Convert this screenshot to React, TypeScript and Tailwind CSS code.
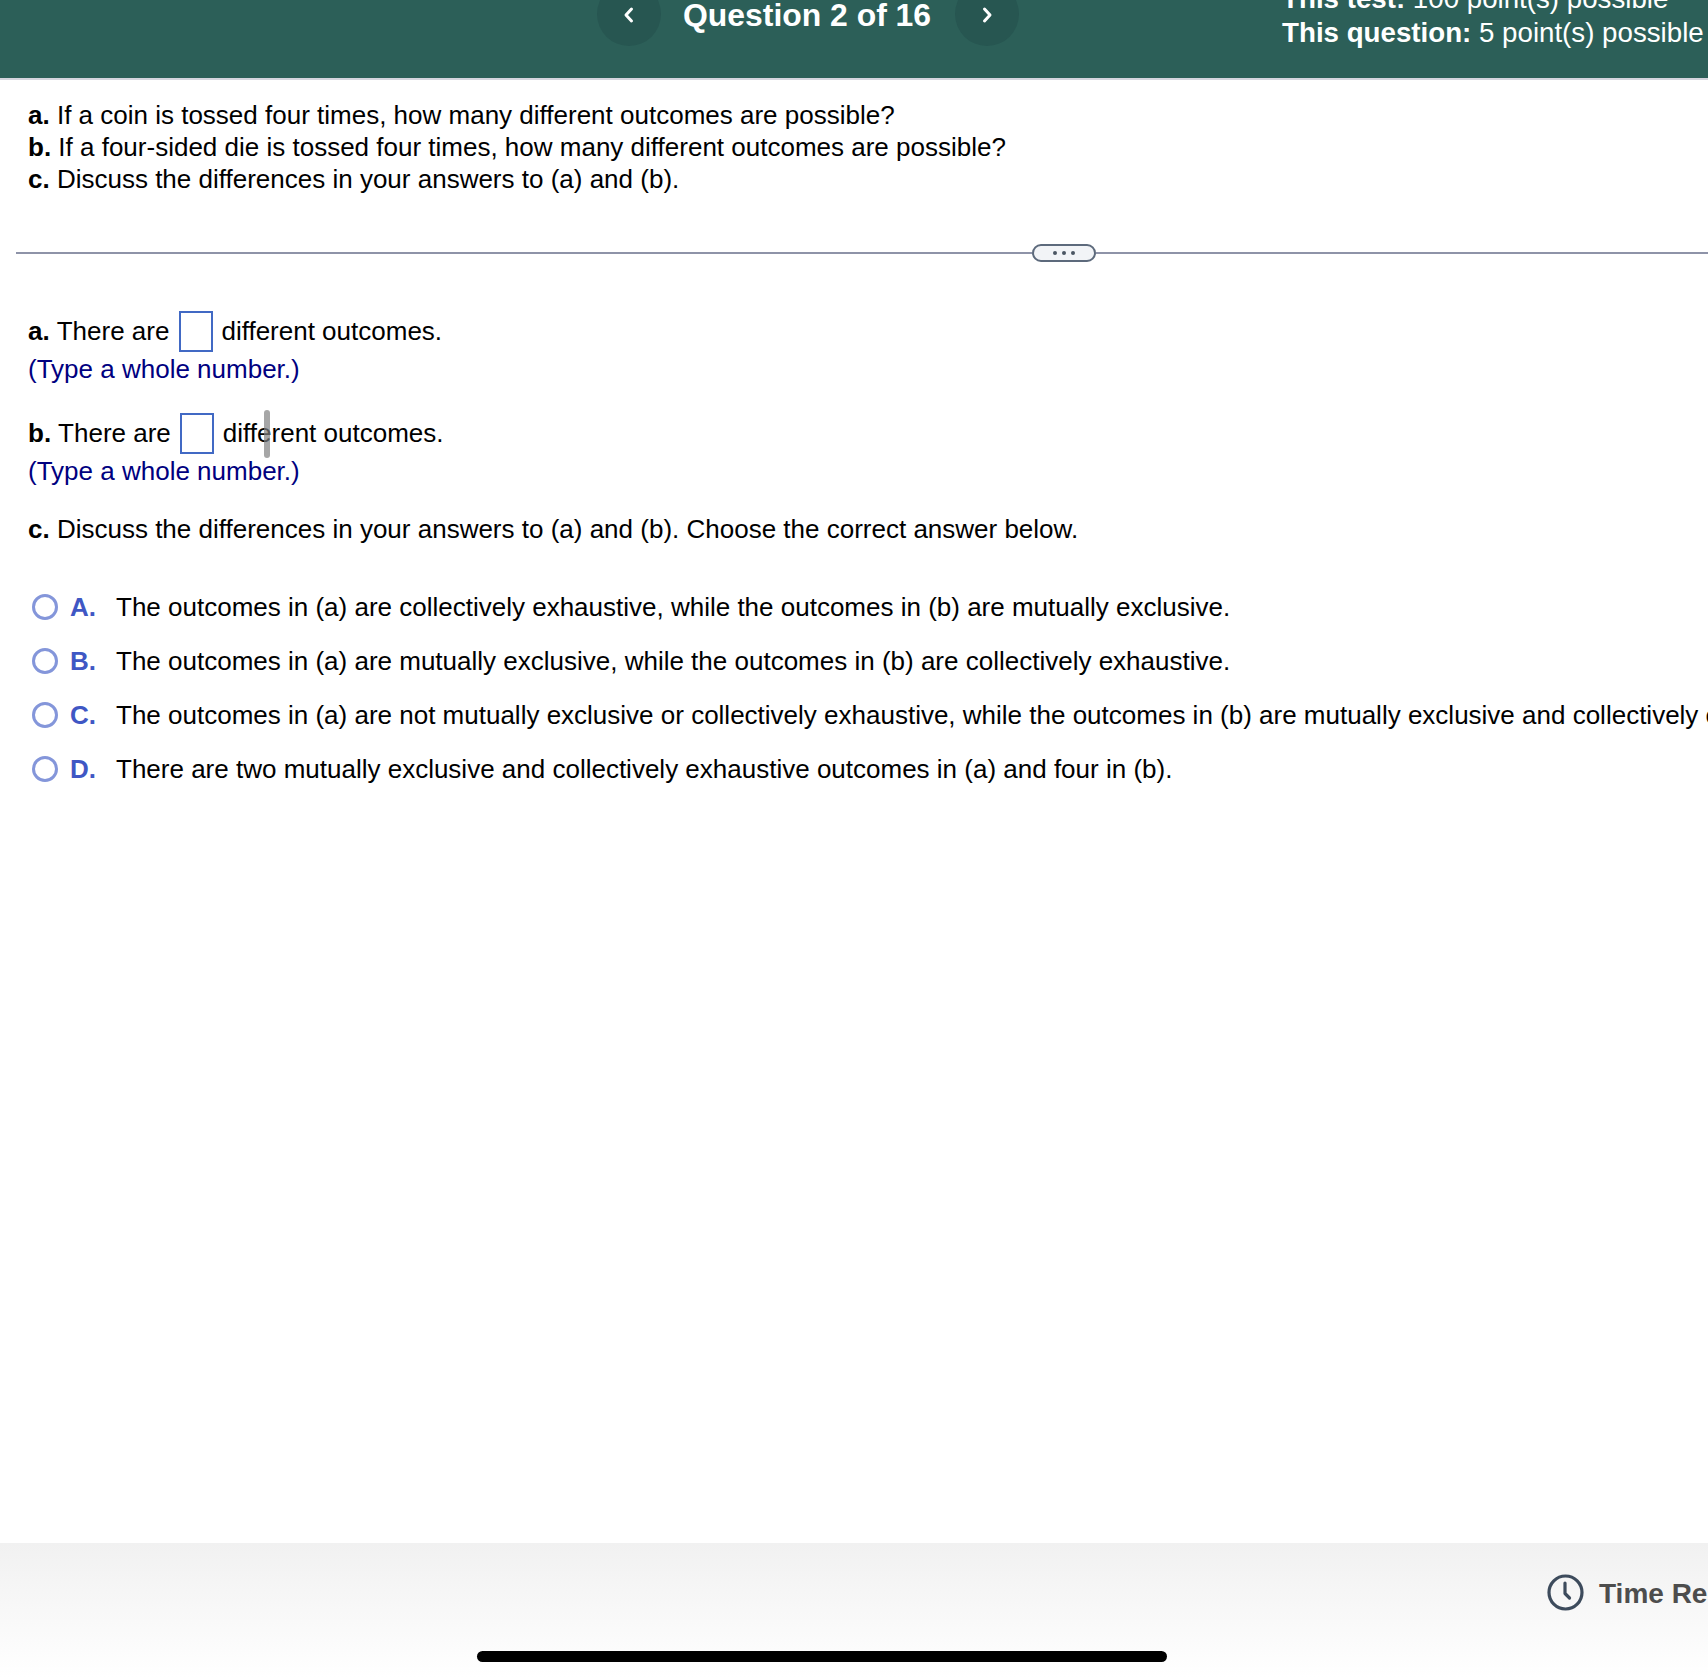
import React from "react";

const options = [
  { key: "A.", text: "The outcomes in (a) are collectively exhaustive, while the outcomes in (b) are mutually exclusive." },
  { key: "B.", text: "The outcomes in (a) are mutually exclusive, while the outcomes in (b) are collectively exhaustive." },
  {
    key: "C.",
    text: "The outcomes in (a) are not mutually exclusive or collectively exhaustive, while the outcomes in (b) are mutually exclusive and collectively exhaustive.",
  },
  { key: "D.", text: "There are two mutually exclusive and collectively exhaustive outcomes in (a) and four in (b)." },
];

const NavButton: React.FC<{ dir: "left" | "right" }> = ({ dir }) => (
  <div className="w-[64px] h-[64px] rounded-full bg-[#275651] flex items-center justify-center">
    <svg className="mt-[2px]" width="12" height="18" viewBox="0 0 12 18" fill="none" stroke="#ffffff" strokeWidth="3" strokeLinecap="round" strokeLinejoin="round">
      {dir === "left" ? <polyline points="8.5,3 3,9 8.5,15" /> : <polyline points="3.5,3 9,9 3.5,15" />}
    </svg>
  </div>
);

const AnswerBox: React.FC = () => <span className="inline-block w-[34px] h-[41px] border-2 border-[#4169c4] bg-white" />;

const App: React.FC = () => {
  return (
    <div className="relative w-[1708px] h-[1678px] overflow-hidden bg-white flex flex-col whitespace-nowrap text-black text-[26px] font-['Liberation_Sans',Arial,sans-serif]">
      <header className="h-[80px] shrink-0 bg-[#2c5f58] border-b-2 border-[#d5d5de] flex items-start">
        <div className="ml-[597px] -mt-[18px] flex items-center">
          <NavButton dir="left" />
          <div className="ml-[22px] mr-[24px] mt-[4px] text-[31.9px] font-bold text-white">Question 2 of 16</div>
          <NavButton dir="right" />
        </div>
        <div className="ml-[263px] -mt-[15px] text-white text-[27.7px] leading-[32px]">
          <div className="-mt-[2px]">
            <span className="font-bold">This test:</span> 100 point(s) possible
          </div>
          <div className="mt-[2px]">
            <span className="font-bold">This question:</span> 5 point(s) possible
          </div>
        </div>
      </header>

      <section className="pl-[28px] pt-[19px] leading-[32px]">
        <div>
          <b>a.</b> If a coin is tossed four times, how many different outcomes are possible?
        </div>
        <div>
          <b>b.</b> If a four-sided die is tossed four times, how many different outcomes are possible?
        </div>
        <div>
          <b>c.</b> Discuss the differences in your answers to (a) and (b).
        </div>
      </section>

      <div className="mt-[48px] ml-[16px] h-[20px] flex items-center">
        <div className="w-[1016px] h-[2px] bg-[#8e93a8]" />
        <div className="w-[64px] h-[18px] shrink-0 rounded-full border-2 border-[#5d6a7c] bg-[#f2f4f7] flex items-center justify-center gap-[5px]">
          <span className="w-[4px] h-[4px] rounded-full bg-[#4b5563]" />
          <span className="w-[4px] h-[4px] rounded-full bg-[#4b5563]" />
          <span className="w-[4px] h-[4px] rounded-full bg-[#4b5563]" />
        </div>
        <div className="flex-1 h-[2px] bg-[#8e93a8]" />
      </div>

      <section className="pl-[28px] mt-[48px]">
        <div className="flex items-center h-[40px]">
          <b>a.</b>
          <span className="ml-[7px]">There are</span>
          <span className="ml-[10px] flex"><AnswerBox /></span>
          <span className="ml-[8px]">different outcomes.</span>
        </div>
        <div className="mt-[2px] leading-[32px] text-[#000080]">(Type a whole number.)</div>
        <div className="mt-[28px] flex items-center h-[40px]">
          <b>b.</b>
          <span className="ml-[7px]">There are</span>
          <span className="ml-[9px] flex"><AnswerBox /></span>
          <span className="ml-[9px]">different outcomes.</span>
        </div>
        <div className="mt-[2px] leading-[32px] text-[#000080]">(Type a whole number.)</div>
        <div className="mt-[26px] leading-[32px]">
          <b>c.</b> Discuss the differences in your answers to (a) and (b). Choose the correct answer below.
        </div>
      </section>

      <section className="mt-[46px] pl-[32px] flex flex-col gap-[22px]">
        {options.map((o) => (
          <div key={o.key} className="flex items-center h-[32px]">
            <span className="w-[26px] h-[26px] shrink-0 rounded-full border-[3px] border-[#8496da] bg-white" />
            <span className="w-[58px] pl-[12px] shrink-0 font-bold text-[#3f57c4]">{o.key}</span>
            <span>{o.text}</span>
          </div>
        ))}
      </section>

      <footer className="mt-auto h-[135px] shrink-0 bg-gradient-to-b from-[#f1f1f1] to-[#ffffff] relative">
        <div className="pl-[1547px] pt-[30px] flex items-center">
          <svg className="shrink-0 -mt-[4px]" width="37" height="37" viewBox="0 0 37 37" fill="none" stroke="#3d4b5c" strokeWidth="3.2" strokeLinecap="round" strokeLinejoin="round">
            <circle cx="18.5" cy="18.5" r="16.5" />
            <polyline points="18,9 18,19.5 22.5,24" />
          </svg>
          <span className="ml-[15px] font-bold text-[28px] text-[#4d4d4d]">Time Remaining</span>
        </div>
        <div className="absolute left-[477px] top-[108px] w-[690px] h-[11px] rounded-full bg-black" />
      </footer>

      {/* scroll handle sitting over the text */}
      <div className="absolute left-[264px] top-[410px] w-[6px] h-[48px] rounded-full bg-[#808080]/70" />
    </div>
  );
};

export default App;
